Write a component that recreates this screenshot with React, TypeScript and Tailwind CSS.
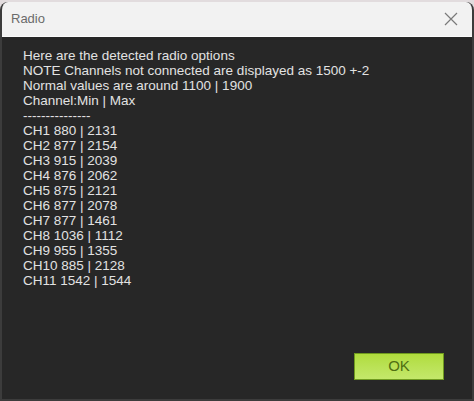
import React from 'react'

const LINES = [
  'Here are the detected radio options',
  'NOTE Channels not connected are displayed as 1500 +-2',
  'Normal values are around 1100 | 1900',
  'Channel:Min | Max',
  '---------------',
  'CH1 880 | 2131',
  'CH2 877 | 2154',
  'CH3 915 | 2039',
  'CH4 876 | 2062',
  'CH5 875 | 2121',
  'CH6 877 | 2078',
  'CH7 877 | 1461',
  'CH8 1036 | 1112',
  'CH9 955 | 1355',
  'CH10 885 | 2128',
  'CH11 1542 | 1544',
]

export default function App() {
  return (
    <div className="w-[474px] h-[401px] bg-[#e2dcde] overflow-hidden" style={{ fontFamily: '"Liberation Sans", Arial, sans-serif' }}>
      <div className="mt-[2px] h-[399px] flex flex-col rounded-t-[8px] overflow-hidden border-x-2 border-b-2 border-[#3c3c3c] bg-[#272727]">
        {/* Title bar */}
        <div className="h-[35px] shrink-0 flex items-center justify-between bg-[#f2f2f2] border-b border-[#fafafa] pl-[9px] pr-[10px]">
          <span className="text-[13px] text-[#6b6b6b]">Radio</span>
          <svg width="16" height="16" viewBox="0 0 16 16" className="mr-[3px]">
            <path d="M2 2 L14 14 M14 2 L2 14" stroke="#7a7a7a" strokeWidth="1.2" fill="none" />
          </svg>
        </div>

        {/* Body */}
        <div className="flex-1 flex flex-col pl-[21px] pt-[11px] pr-[28px] pb-[19px]">
          <div className="flex-1 text-[13.5px] leading-[15px] text-[#e2e2e2]">
            {LINES.map((l, i) => (
              <div key={i} className="whitespace-pre">{l}</div>
            ))}
          </div>
          <div className="flex justify-end">
            <button className="w-[90px] h-[27px] border border-[#6f9a1e] bg-gradient-to-b from-[#b0dc3c] to-[#c4e86a] text-[15px] text-[#4f7012]">
              OK
            </button>
          </div>
        </div>
      </div>
    </div>
  )
}
